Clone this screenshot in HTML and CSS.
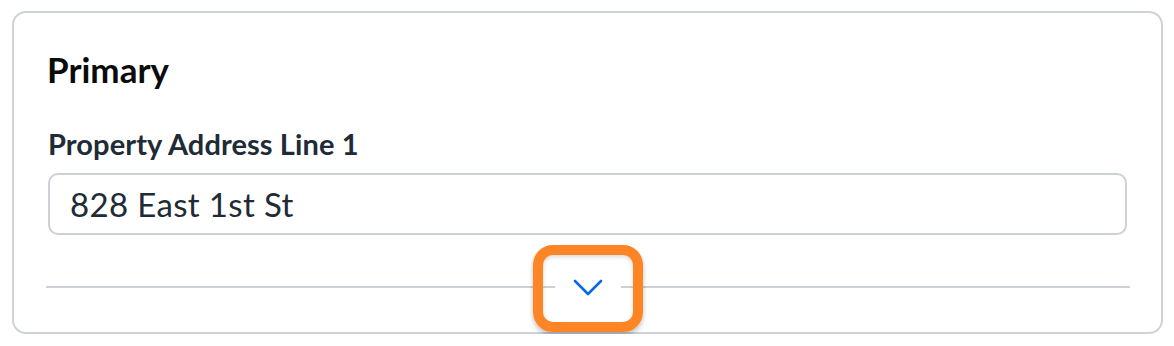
FILE: index.html
```html
<!DOCTYPE html>
<html>
<head>
<meta charset="utf-8">
<link rel="stylesheet" href="styles.css">
</head>
<body>
<section class="card">
  <h2 class="card-title">Primary</h2>
  <label class="field-label" for="addr1">Property Address Line 1</label>
  <div class="input" id="addr1">828 East 1st St</div>
  <div class="divider">
    <span class="rule"></span>
    <button class="expand" aria-label="Expand">
      <svg width="30" height="17" viewBox="0 0 30 17"><path d="M2 2 L15 15 L28 2" fill="none" stroke="#0a6ae6" stroke-width="2.6" stroke-linecap="round" stroke-linejoin="round"/></svg>
      <span class="highlight"></span>
    </button>
    <span class="rule"></span>
  </div>
</section>
</body>
</html>
```
FILE: styles.css
```css
* { box-sizing: border-box; }
html, body { margin: 0; background: #fff; }
body {
  font-family: Lato, "Noto Sans", sans-serif;
  color: #202b36;
  padding: 11px 11px 0 12px;
}
.card {
  width: 1151px;
  height: 323px;
  border: 2px solid #cfd2d6;
  border-radius: 14px;
  padding: 0 31px 0 34px;
  display: flex;
  flex-direction: column;
}
.card-title {
  margin: 35px 0 0 -1px;
  font-size: 35px;
  line-height: 42px;
  font-weight: 700;
  color: #0b0b0b;
}
.field-label {
  margin-top: 37px;
  font-size: 29px;
  line-height: 34px;
  font-weight: 700;
  color: #202b36;
  letter-spacing: 0.1px;
}
.input {
  margin: 12px 0 0 0;
  width: 1079px;
  height: 62px;
  border: 2px solid #cdd1d6;
  border-radius: 10px;
  padding: 0 0 0 20px;
  display: flex;
  align-items: center;
  font-size: 33px;
  color: #202b36;
  letter-spacing: 0.35px;
}
.divider {
  margin: 36px 0 0 -2px;
  display: flex;
  align-items: center;
  width: 1084px;
}
.rule {
  flex: 1;
  height: 2px;
  background: #cdd0d4;
}
.expand {
  position: relative;
  width: 66px;
  height: 32px;
  border: 0;
  padding: 0;
  background: #fff;
  display: flex;
  align-items: center;
  justify-content: center;
}
.highlight {
  position: absolute;
  left: -22px;
  top: -26px;
  width: 110px;
  height: 87px;
  border: 10px solid #fe8526;
  border-radius: 20px;
  box-shadow: 0 3px 5px rgba(0,0,0,0.25), inset 0 2px 4px rgba(0,0,0,0.15);
}
```
